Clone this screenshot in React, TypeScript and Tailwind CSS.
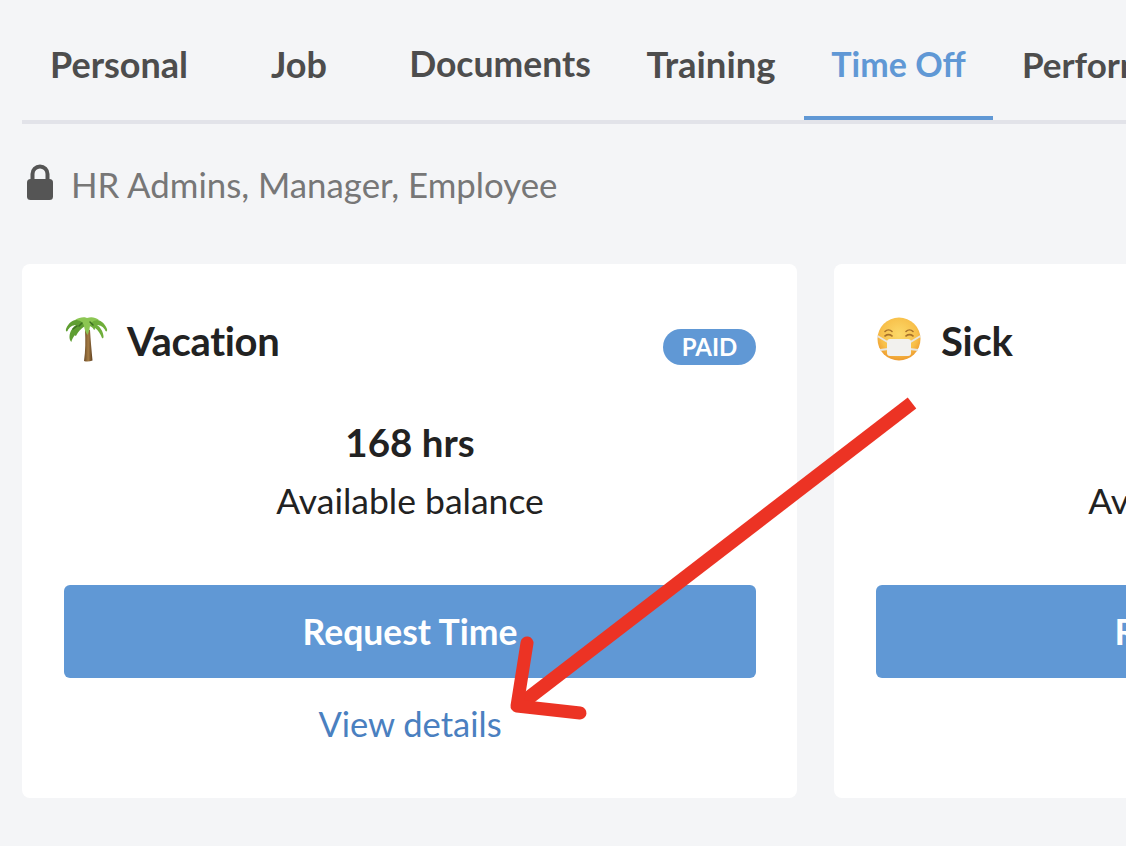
import React from 'react';
import { clsx } from 'clsx';

const TABS = [
    { label: 'Personal', width: 'w-[194px] text-center text-[36px]' },
    { label: 'Job', width: 'w-[166px] text-center text-[36px]' },
    { label: 'Documents', width: 'w-[236px] text-center text-[35.500px]' },
    { label: 'Training', width: 'w-[186px] text-center text-[36.500px]' },
    { label: 'Time Off', width: 'w-[189px] text-center text-[34px]', active: true },
    { label: 'Performance', width: 'w-[240px] pl-[29px] text-left text-[35px]' },
];

const LockIcon = () => (
    <svg width="28" height="37" viewBox="0 0 28 37" className="shrink-0 mt-[-5px]">
        <path d="M6.500 17V10a7.500 7.500 0 0 1 15 0v7" fill="none" stroke="#555" strokeWidth="4" />
        <rect x="1" y="15" width="26" height="21" rx="3.500" fill="#555" />
    </svg>
);

const PalmEmoji = () => (
    <svg width="44" height="46" viewBox="0 0 44 46" className="shrink-0 mt-[-4px] ml-[1px] mr-[-1px]">
        <defs>
            <linearGradient id="trunk" x1="0" y1="0" x2="1" y2="0">
                <stop offset="0" stopColor="#6b4a25" />
                <stop offset="0.5" stopColor="#a57c45" />
                <stop offset="1" stopColor="#5c3d1e" />
            </linearGradient>
        </defs>
        <path d="M20 14c2-.5 4-.5 5 0 .6 10 1.500 20 2.500 30.500-3 1.300-6 1.300-8.500.5 1.500-10 1.500-21 1-31z" fill="url(#trunk)" />
        <path d="M21 8C15 1 5 3 1 13c-.5 2 .5 3 1.500 2C4 11 8 9 11 9c-3 2-6 6-6.500 11-.3 3 .8 5 1.800 6 .7-3 2-5 3.700-7 .5 1.500 1 1 1.500 0 1.500-3 4-6 8.500-9z" fill="#5f9e32" />
        <path d="M22 8c6-7 16-5 20 5 .5 2-.5 3-1.500 2C39 11 35 9 32 9c3 2 6 6 6.500 11 .2 2-.7 2.800-1.500 2-1.500-4-4-8-7-10-.5 3-1 2-1.500 1-1-2-3-3-6.500-4z" fill="#6fae3a" />
        <path d="M10 4c4-3 10-3.500 12-2 4-1.500 8-1 12 2-5 0-8 2-9 6-.5 4-1.500 7-2.500 9-1.500-2-3-5-3.500-9-1-4-4-6-9-6z" fill="#8cc653" />
        <path d="M14 10l3-3M28 9l-3-3M8 13l4-3" stroke="#3d6e22" strokeWidth="1.500" strokeLinecap="round" fill="none" />
    </svg>
);

const MaskEmoji = () => (
    <svg width="46" height="44" viewBox="0 0 46 44" className="shrink-0 mt-[-4px]">
        <defs>
            <radialGradient id="face" cx="0.5" cy="0.4" r="0.6">
                <stop offset="0" stopColor="#fcd96a" />
                <stop offset="0.7" stopColor="#f8c04a" />
                <stop offset="1" stopColor="#ed9a2e" />
            </radialGradient>
        </defs>
        <circle cx="23" cy="22" r="21.500" fill="url(#face)" />
        <path d="M9 14.500c2-2 5-2 7 0M30 14.500c2-2 5-2 7 0M9 19c2-1.500 5-1.500 7 0M30 19c2-1.500 5-1.500 7 0" stroke="#a8722a" strokeWidth="1.600" strokeLinecap="round" fill="none" />
        <path d="M1.500 19l10 6M44.500 19l-10 6M4 33l8-1M42 33l-8-1" stroke="#e8e6e0" strokeWidth="2" fill="none" />
        <rect x="11" y="22" width="24" height="17" rx="3" fill="#f2f1ee" />
    </svg>
);

const TimeOffCard = ({ emoji, title, paid }: { emoji: React.ReactNode; title: string; paid?: boolean }) => (
    <div className="w-[775px] h-[534px] shrink-0 rounded-lg bg-white pl-[42px] pr-[41px] pt-[52px] flex flex-col">
        <div className="flex items-center justify-between h-[50px]">
            <div className="flex items-center gap-[19px]">
                {emoji}
                <h2 className="text-[40px] leading-none font-bold text-[#222] tracking-[-0.3px]">{title}</h2>
            </div>
            {paid && (
                <span className="w-[93px] h-[36px] mt-[12px] rounded-full bg-[#6098d5] text-white text-[24px] font-bold flex items-center justify-center">PAID</span>
            )}
        </div>
        <div className="mt-[51px] text-center">
            <p className="text-[38.500px] leading-[50px] font-bold text-[#222]">168 hrs</p>
            <p className="text-[35.500px] leading-[50px] mt-[9px] text-[#222]">Available balance</p>
        </div>
        <button className="mt-[59px] h-[93px] rounded-md bg-[#6098d5] text-white text-[35.500px] font-bold shrink-0">Request Time</button>
        <a className="mt-[24px] text-center text-[#4a80c0] text-[34.500px] leading-[44px]">View details</a>
    </div>
);

export default function App() {
    return (
        <div className="relative w-[1126px] h-[846px] overflow-hidden bg-[#f4f5f7] pl-[22px] font-['Lato',sans-serif]">
            {/* Tabs */}
            <div className="flex w-[1200px] h-[124px] border-b-4 border-[#e2e3e9]">
                {TABS.map((tab) => (
                    <div
                        key={tab.label}
                        className={clsx(
                            'h-[120px] shrink-0 pt-[39px] leading-[50px] font-bold whitespace-nowrap',
                            tab.width,
                            tab.active ? 'text-[#6098d5] border-b-4 border-[#6098d5]' : 'text-[#4d4d4d]'
                        )}
                    >
                        {tab.label}
                    </div>
                ))}
            </div>

            {/* Access line */}
            <div className="flex items-center gap-[17px] h-[40px] mt-[41px] pl-[4px]">
                <LockIcon />
                <span className="text-[34.800px] leading-none text-[#777]">HR Admins, Manager, Employee</span>
            </div>

            {/* Cards */}
            <div className="flex gap-[37px] mt-[59px]">
                <TimeOffCard emoji={<PalmEmoji />} title="Vacation" paid />
                <TimeOffCard emoji={<MaskEmoji />} title="Sick" />
            </div>

            {/* Annotation arrow */}
            <svg width="1126" height="846" viewBox="0 0 1126 846" className="absolute inset-0 pointer-events-none">
                <path d="M912 403L522 703" stroke="#ec3324" strokeWidth="14" fill="none" />
                <path d="M527 643L517 706L580 713" stroke="#ec3324" strokeWidth="13" strokeLinecap="round" strokeLinejoin="round" fill="none" />
            </svg>
        </div>
    );
}
